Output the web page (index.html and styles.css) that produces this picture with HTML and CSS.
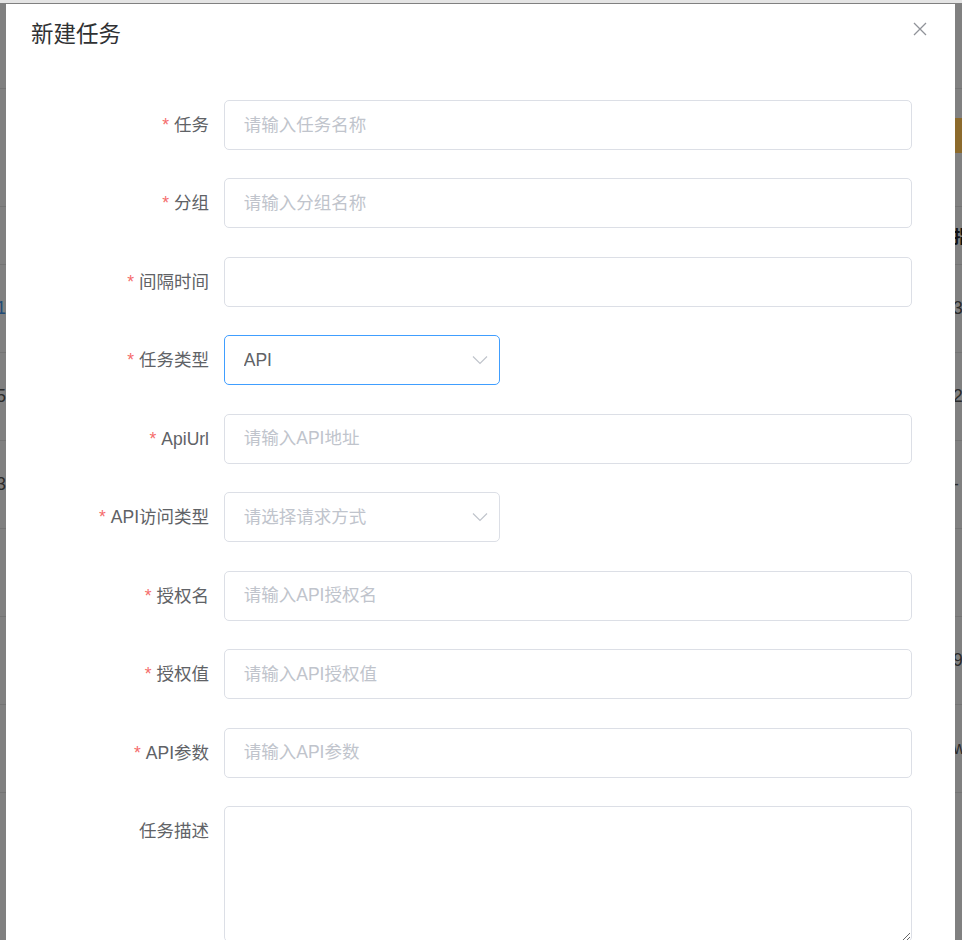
FILE: index.html
```html
<!DOCTYPE html>
<html lang="zh-CN">

<head>
  <meta charset="UTF-8">
  <meta name="viewport" content="width=device-width, initial-scale=1.0">
  <title>新建任务</title>
  <link rel="stylesheet" href="styles.css">
</head>

<body>
  <!-- pagina de fondo, oscurecida por la mascara -->
  <div class="page">
    <div class="page-strip"></div>
    <div class="page-gap gap-top"></div>
    <div class="page-gap gap-small"></div>
    <div class="page-actions">
      <span class="btn-gold"></span>
    </div>
    <div class="page-gap gap-mid"></div>
    <div class="page-row thead">
      <span class="cell-left"></span>
      <span class="cell-right bold">指标</span>
    </div>
    <div class="page-row">
      <span class="cell-left link">21</span>
      <span class="cell-right">30</span>
    </div>
    <div class="page-row">
      <span class="cell-left">15</span>
      <span class="cell-right">23</span>
    </div>
    <div class="page-row">
      <span class="cell-left">13</span>
      <span class="cell-right">-</span>
    </div>
    <div class="page-row">
      <span class="cell-left"></span>
      <span class="cell-right"></span>
    </div>
    <div class="page-row">
      <span class="cell-left"></span>
      <span class="cell-right">9</span>
    </div>
    <div class="page-row">
      <span class="cell-left"></span>
      <span class="cell-right">w</span>
    </div>
  </div>

  <div class="dialog">
    <div class="dialog-header">
      <span class="dialog-title">新建任务</span>
      <span class="dialog-close">
        <svg width="20" height="20" viewBox="0 0 20 20">
          <path d="M4 4 L16 16 M16 4 L4 16" stroke="#909399" stroke-width="1.3" fill="none"/>
        </svg>
      </span>
    </div>

    <div class="dialog-body">
      <form class="form">
        <div class="form-item">
          <label class="form-label required">任务</label>
          <div class="form-control">
            <input class="input" type="text" placeholder="请输入任务名称">
          </div>
        </div>
        <div class="form-item">
          <label class="form-label required">分组</label>
          <div class="form-control">
            <input class="input" type="text" placeholder="请输入分组名称">
          </div>
        </div>
        <div class="form-item">
          <label class="form-label required">间隔时间</label>
          <div class="form-control">
            <input class="input" type="text">
          </div>
        </div>
        <div class="form-item">
          <label class="form-label required">任务类型</label>
          <div class="form-control">
            <div class="select">
              <input class="input focused" type="text" value="API" readonly>
              <svg class="select-arrow" width="16" height="10" viewBox="0 0 16 10">
                <path d="M1 1.5 L8 8.5 L15 1.5" stroke="#c0c4cc" stroke-width="1.2" fill="none"/>
              </svg>
            </div>
          </div>
        </div>
        <div class="form-item">
          <label class="form-label required">ApiUrl</label>
          <div class="form-control">
            <input class="input" type="text" placeholder="请输入API地址">
          </div>
        </div>
        <div class="form-item">
          <label class="form-label required">API访问类型</label>
          <div class="form-control">
            <div class="select">
              <input class="input" type="text" placeholder="请选择请求方式" readonly>
              <svg class="select-arrow" width="16" height="10" viewBox="0 0 16 10">
                <path d="M1 1.5 L8 8.5 L15 1.5" stroke="#c0c4cc" stroke-width="1.2" fill="none"/>
              </svg>
            </div>
          </div>
        </div>
        <div class="form-item">
          <label class="form-label required">授权名</label>
          <div class="form-control">
            <input class="input" type="text" placeholder="请输入API授权名">
          </div>
        </div>
        <div class="form-item">
          <label class="form-label required">授权值</label>
          <div class="form-control">
            <input class="input" type="text" placeholder="请输入API授权值">
          </div>
        </div>
        <div class="form-item">
          <label class="form-label required">API参数</label>
          <div class="form-control">
            <input class="input" type="text" placeholder="请输入API参数">
          </div>
        </div>
        <div class="form-item">
          <label class="form-label">任务描述</label>
          <div class="form-control">
            <textarea class="textarea"></textarea>
          </div>
        </div>
      </form>
    </div>
  </div>
</body>

</html>
```

FILE: styles.css
```css
    body {
      margin: 0;
      width: 962px;
      height: 940px;
      overflow: hidden;
      position: relative;
      background-color: #808080;
      font-family: "Liberation Sans", "Noto Sans CJK SC", sans-serif;
    }

    /* pagina de fondo */
    .page {
      display: flex;
      flex-direction: column;
    }

    .page-strip {
      height: 3px;
      background-color: #e4e4e4;
    }

    .page-gap {
      border-bottom: 1px solid #747474;
    }

    .gap-top {
      height: 85px;
    }

    .gap-small {
      height: 29px;
      border-bottom: none;
    }

    .page-actions {
      display: flex;
      justify-content: flex-end;
      height: 35px;
    }

    .btn-gold {
      width: 40px;
      height: 35px;
      background-color: #8c6a2c;
    }

    .gap-mid {
      height: 53px;
    }

    .page-row {
      display: flex;
      justify-content: space-between;
      align-items: center;
      height: 87px;
      border-bottom: 1px solid #747474;
      color: #2b2b2b;
      font-size: 17.5px;
    }

    .page-row.thead {
      height: 57px;
    }

    .cell-left {
      width: 6px;
      display: flex;
      justify-content: flex-end;
      overflow: hidden;
      white-space: nowrap;
    }

    .cell-right {
      width: 9px;
      overflow: hidden;
      white-space: nowrap;
    }

    .link {
      color: #204a75;
    }

    .bold {
      font-weight: bold;
      color: #111;
    }

    /* dialogo */
    .dialog {
      position: absolute;
      left: 6px;
      top: 4px;
      width: 949px;
      height: 1000px;
      background-color: #FFF;
    }

    .dialog-header {
      position: relative;
      padding: 16px 25px 12.5px;
    }

    .dialog-title {
      display: block;
      font-size: 22.5px;
      line-height: 30px;
      color: #303133;
    }

    .dialog-close {
      position: absolute;
      top: 15px;
      right: 25px;
      width: 20px;
      height: 20px;
    }

    .dialog-close svg {
      display: block;
    }

    .dialog-body {
      padding: 37.5px 43px 37.5px 25px;
    }

    .form-item {
      display: flex;
      margin-bottom: 28.45px;
    }

    .form-label {
      flex: none;
      width: 193px;
      box-sizing: border-box;
      padding-right: 15px;
      text-align: right;
      font-size: 17.5px;
      line-height: 50px;
      color: #606266;
    }

    .form-label.required::before {
      content: "*";
      color: #f56c6c;
      margin-right: 5px;
    }

    .form-control {
      flex: 1;
    }

    .input {
      display: block;
      width: 100%;
      height: 50px;
      box-sizing: border-box;
      padding: 0 18.75px;
      border: 1px solid #dcdfe6;
      border-radius: 5px;
      font-family: inherit;
      font-size: 17.5px;
      color: #606266;
      background-color: #FFF;
      outline: none;
    }

    .input::placeholder,
    .textarea::placeholder {
      color: #c0c4cc;
    }

    .input.focused {
      border-color: #409eff;
    }

    .select {
      position: relative;
      width: 276px;
    }

    .select-arrow {
      position: absolute;
      top: 20px;
      right: 12px;
    }

    .textarea {
      display: block;
      width: 100%;
      height: 136px;
      box-sizing: border-box;
      padding: 6.25px 18.75px;
      border: 1px solid #dcdfe6;
      border-radius: 5px;
      font-family: inherit;
      font-size: 17.5px;
      color: #606266;
      resize: vertical;
      outline: none;
    }
```
